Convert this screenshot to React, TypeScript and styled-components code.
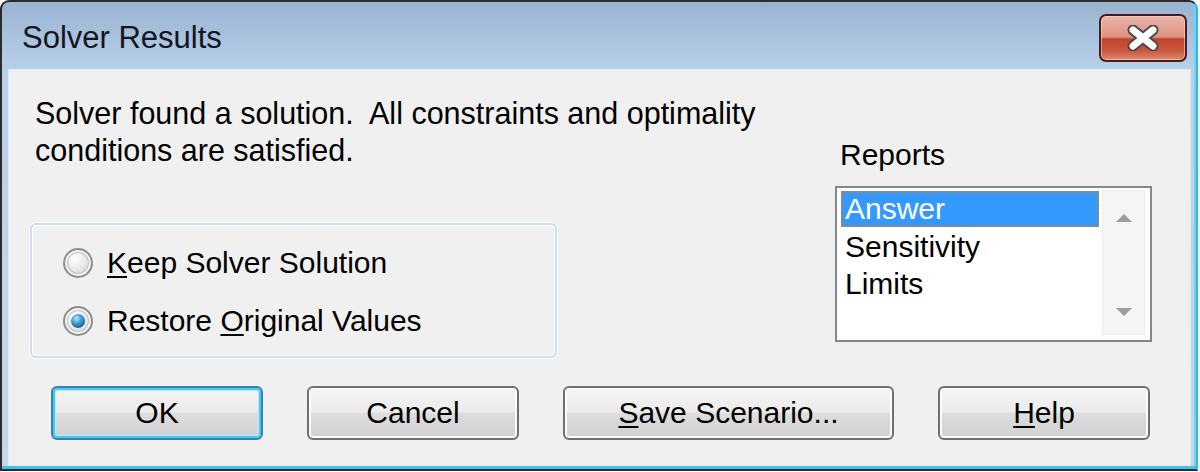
import React from "react";
import styled, { createGlobalStyle, css } from "styled-components";

const GlobalStyle = createGlobalStyle`
  html, body { margin: 0; padding: 0; background: #ffffff; }
  body { font-family: "Liberation Sans", Arial, sans-serif; }
  * { box-sizing: border-box; }
`;

const Window = styled.div`
  width: 1198px;
  height: 471px;
  display: flex;
  flex-direction: column;
  border: 2px solid #2b2b2b;
  border-right-color: #33b6e2;
  border-radius: 9px 9px 0 0;
  background: linear-gradient(180deg, #98b3d1 0px, #b9d0ea 68px, #c3d8ee 100%);
  box-shadow: inset 0 -3px 0 #3ec3ea, inset -2px 0 0 #6fd3f0;
`;

const TitleBar = styled.div`
  height: 68px;
  flex: none;
  display: flex;
  align-items: flex-start;
  justify-content: space-between;
  padding: 0 9px 0 20px;
`;

const Title = styled.div`
  margin-top: 19px;
  font-size: 31px;
  line-height: 34px;
  color: #151520;
`;

const CloseButton = styled.div`
  margin-top: 12px;
  width: 88px;
  height: 48px;
  border: 2px solid #4a1c1c;
  border-radius: 7px;
  display: flex;
  align-items: center;
  justify-content: center;
  background: linear-gradient(
    180deg,
    #eab4a8 0%,
    #dd927f 48%,
    #c2442b 52%,
    #c9563c 78%,
    #db8a70 100%
  );
  box-shadow: inset 0 0 0 1px rgba(255, 220, 210, 0.55);
`;

const Client = styled.div`
  flex: 1;
  margin: 0 6px 4px 7px;
  background: #f0f0f0;
  padding: 0 38px 0 21px;
  display: flex;
  flex-direction: column;
  box-shadow: 0 0 0 1px rgba(255, 255, 255, 0.55);
`;

const TopSection = styled.div`
  height: 316px;
  flex: none;
  display: flex;
  justify-content: space-between;
`;

const LeftCol = styled.div`
  display: flex;
  flex-direction: column;
  padding-top: 25px;
`;

const Message = styled.p`
  margin: 0 0 0 5px;
  font-size: 30.5px;
  line-height: 37px;
  color: #000;
  white-space: pre;
`;

const GroupBox = styled.div`
  margin-top: 54px;
  width: 527px;
  height: 135px;
  border: 2px solid #d3dde6;
  border-radius: 6px;
  box-shadow: inset 0 0 0 1px #fbfdff, 0 0 0 1px #fbfdff;
  padding: 19px 0 0 31px;
  display: flex;
  flex-direction: column;
  gap: 21px;
`;

const RadioRow = styled.label`
  display: flex;
  align-items: center;
  gap: 14px;
  height: 37px;
  font-size: 30px;
  color: #000;
`;

const RadioCircle = styled.span<{ $checked?: boolean }>`
  position: relative;
  width: 30px;
  height: 30px;
  flex: none;
  border-radius: 50%;
  border: 2px solid #8d8f90;
  background: radial-gradient(circle at 38% 32%, #ffffff 0%, #e4e4e4 55%, #c9c9c9 100%);
  box-shadow: inset 0 0 0 2px #f3f3f3, inset 0 0 0 3px #c3c3c3;
  ${(p) =>
    p.$checked &&
    css`
      &::after {
        content: "";
        position: absolute;
        left: 6px;
        top: 6px;
        width: 14px;
        height: 14px;
        border-radius: 50%;
        background: radial-gradient(circle at 40% 32%, #b8ecff 0%, #3d9fd8 38%, #145a8c 80%, #0b3a60 100%);
      }
    `}
`;

const Mnemonic = styled.u`
  text-decoration-thickness: 2px;
  text-underline-offset: 3px;
`;

const RightCol = styled.div`
  width: 317px;
  padding-top: 66px;
  display: flex;
  flex-direction: column;
`;

const Label = styled.div`
  margin-left: 5px;
  font-size: 30px;
  line-height: 37px;
  color: #000;
`;

const ListBox = styled.div`
  margin-top: 13px;
  height: 156px;
  border: 2px solid #838790;
  background: #ffffff;
  display: flex;
  padding: 2px 5px 5px 4px;
`;

const ItemList = styled.div`
  flex: 1;
  padding-top: 1px;
  display: flex;
  flex-direction: column;
`;

const Item = styled.div<{ $selected?: boolean }>`
  height: 37px;
  line-height: 33px;
  padding-left: 2px;
  font-size: 30px;
  border: 2px solid transparent;
  color: #000;
  ${(p) =>
    p.$selected &&
    css`
      height: 36px;
      margin-bottom: 1px;
      line-height: 32px;
      background: #3399ff;
      color: #ffffff;
      border: 2px dotted #c0803a;
    `}
`;

const ScrollBar = styled.div`
  width: 43px;
  margin-left: 3px;
  background: #f5f5f5;
  border: 1px solid #ececec;
  display: flex;
  flex-direction: column;
  justify-content: space-between;
  align-items: center;
  padding: 23px 0 18px;
`;

const Arrow = styled.span<{ $dir: "up" | "down" }>`
  width: 0;
  height: 0;
  border-left: 8px solid transparent;
  border-right: 8px solid transparent;
  ${(p) =>
    p.$dir === "up"
      ? css`border-bottom: 8px solid #9c9c9c;`
      : css`border-top: 8px solid #9c9c9c;`}
`;

const ButtonRow = styled.div`
  display: flex;
  gap: 44px;
  margin-left: 21px;
`;

const Button = styled.button<{ $width: number; $default?: boolean }>`
  width: ${(p) => p.$width}px;
  height: 54px;
  border: 2px solid #707070;
  border-radius: 6px;
  font-family: "Liberation Sans", Arial, sans-serif;
  font-size: 30px;
  color: #000;
  padding: 0;
  background: linear-gradient(180deg, #f3f3f3 0%, #ececec 48%, #dedede 50%, #d0d0d0 100%);
  box-shadow: inset 0 0 0 2px #fbfbfb;
  ${(p) =>
    p.$default &&
    css`
      border-color: #3c7fb1;
      box-shadow: inset 0 0 0 2px #48c9f3, inset 0 0 0 3px #b6ecfb;
    `}
`;

function CloseGlyph() {
  return (
    <svg width="34" height="26" viewBox="0 0 34 26">
      <path d="M7 5 L27 21 M27 5 L7 21" stroke="#4a4a4a" strokeWidth="11" strokeLinecap="round" />
      <path d="M7 5 L27 21 M27 5 L7 21" stroke="#ffffff" strokeWidth="7" strokeLinecap="round" />
    </svg>
  );
}

export default function App() {
  return (
    <>
      <GlobalStyle />
      <Window>
        <TitleBar>
          <Title>Solver Results</Title>
          <CloseButton>
            <CloseGlyph />
          </CloseButton>
        </TitleBar>
        <Client>
          <TopSection>
            <LeftCol>
              <Message>
                {"Solver found a solution.  All constraints and optimality\nconditions are satisfied."}
              </Message>
              <GroupBox>
                <RadioRow>
                  <RadioCircle />
                  <span>
                    <Mnemonic>K</Mnemonic>eep Solver Solution
                  </span>
                </RadioRow>
                <RadioRow>
                  <RadioCircle $checked />
                  <span>
                    Restore <Mnemonic>O</Mnemonic>riginal Values
                  </span>
                </RadioRow>
              </GroupBox>
            </LeftCol>
            <RightCol>
              <Label>Reports</Label>
              <ListBox>
                <ItemList>
                  <Item $selected>Answer</Item>
                  <Item>Sensitivity</Item>
                  <Item>Limits</Item>
                </ItemList>
                <ScrollBar>
                  <Arrow $dir="up" />
                  <Arrow $dir="down" />
                </ScrollBar>
              </ListBox>
            </RightCol>
          </TopSection>
          <ButtonRow>
            <Button $width={212} $default>
              OK
            </Button>
            <Button $width={212}>Cancel</Button>
            <Button $width={331}>
              <Mnemonic>S</Mnemonic>ave Scenario...
            </Button>
            <Button $width={212}>
              <Mnemonic>H</Mnemonic>elp
            </Button>
          </ButtonRow>
        </Client>
      </Window>
    </>
  );
}
